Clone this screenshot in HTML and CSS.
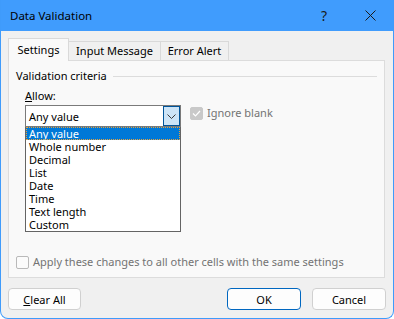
FILE: index.html
```html
<!DOCTYPE html>
<html lang="en">
<head>
  <meta charset="UTF-8">
  <title>Data Validation</title>
  <link rel="stylesheet" href="styles.css">
</head>
<body>
  <div class="window">
    <div class="titlebar">
      <span class="title">Data Validation</span>
      <span class="tb-btn help">?</span>
      <span class="tb-btn close">
        <svg width="11" height="11" viewBox="0 0 11 11"><path d="M0.5 0.5L10.5 10.5M10.5 0.5L0.5 10.5" stroke="#1a1a1a" stroke-width="1" fill="none"/></svg>
      </span>
    </div>

    <div class="content">
      <div class="tabs">
        <div class="tab active">Settings</div>
        <div class="tab tab-input">Input Message</div>
        <div class="tab tab-error">Error Alert</div>
      </div>

      <div class="panel">
        <div class="group-head">
          <span>Validation criteria</span>
          <span class="group-line"></span>
        </div>

        <div class="allow">
          <div class="allow-label"><u>A</u>llow:</div>
          <div class="allow-row">
            <div class="combo">
              <div class="select">
                <span class="select-text">Any value</span>
                <span class="drop-btn">
                  <svg width="9" height="5" viewBox="0 0 9 5"><path d="M0.5 0.5L4.5 4.5L8.5 0.5" stroke="#3b3b3b" stroke-width="1" fill="none"/></svg>
                </span>
              </div>
              <ul class="list">
                <li class="selected">Any value</li>
                <li>Whole number</li>
                <li>Decimal</li>
                <li>List</li>
                <li>Date</li>
                <li>Time</li>
                <li>Text length</li>
                <li>Custom</li>
              </ul>
            </div>
            <div class="check-row ignore">
              <span class="box checked">
                <svg width="9" height="7" viewBox="0 0 9 7"><path d="M1 3.5L3.5 6L8 1" stroke="#fff" stroke-width="1.2" fill="none"/></svg>
              </span>
              <span class="muted">Ignore blank</span>
            </div>
          </div>
        </div>

        <div class="check-row apply">
          <span class="box"></span>
          <span class="muted">Apply these changes to all other cells with the same settings</span>
        </div>
      </div>

      <div class="footer">
        <button class="btn clear"><u>C</u>lear All</button>
        <span class="spacer"></span>
        <button class="btn default">OK</button>
        <button class="btn">Cancel</button>
      </div>
    </div>
  </div>
</body>
</html>
```

FILE: styles.css
```css
body {
  margin: 0;
  background: #fff;
  font-family: "Noto Sans", "Open Sans", sans-serif;
  font-size: 11px;
  color: #000;
}
.window {
  width: 394px;
  height: 319px;
  box-sizing: border-box;
  border: 1px solid #3f9bfb;
  border-top: none;
  border-radius: 0 0 8px 8px;
  background: #f0f0f0;
  overflow: hidden;
}
.titlebar {
  height: 31px;
  background: #409cfd;
  display: flex;
  align-items: center;
  padding-left: 9px;
}
.title {
  flex: 1;
  font-size: 11.5px;
  line-height: 16px;
}
.tb-btn {
  width: 46px;
  height: 31px;
  display: flex;
  align-items: center;
  justify-content: center;
}
.help {
  font-size: 14px;
  color: #1a1a1a;
}
.content {
  padding: 7px 7px 0 7px;
}
.tabs {
  display: flex;
  align-items: flex-end;
  height: 22px;
}
.tab {
  box-sizing: border-box;
  flex-shrink: 0;
  height: 19px;
  border: 1px solid #d9d9d9;
  border-bottom: none;
  background: #f0f0f0;
  line-height: 18px;
  text-align: center;
}
.tab.active {
  width: 61px;
  height: 23px;
  margin-bottom: -1px;
  background: #f9f9f9;
  line-height: 21px;
  position: relative;
  z-index: 1;
}
.tab-input {
  width: 92px;
  border-left: none;
}
.tab-error {
  width: 68px;
  border-left: none;
}
.panel {
  box-sizing: border-box;
  width: 377px;
  height: 218px;
  border: 1px solid #dcdcdc;
  background: #f9f9f9;
  padding: 7px 7px 0 7px;
  display: flex;
  flex-direction: column;
}
.group-head {
  display: flex;
  align-items: center;
  height: 16px;
  line-height: 16px;
}
.group-line {
  flex: 1;
  height: 1px;
  background: #dcdcdc;
  margin-left: 6px;
}
.allow {
  margin-left: 9px;
  margin-top: 4px;
}
.allow-label {
  line-height: 16px;
  height: 16px;
  margin-bottom: 1px;
}
.allow-row {
  display: flex;
  align-items: flex-start;
}
.combo {
  width: 156px;
}
.select {
  box-sizing: border-box;
  height: 22px;
  border: 1px solid #7a7a7a;
  background: #fff;
  display: flex;
  align-items: center;
}
.select-text {
  flex: 1;
  padding-left: 3px;
}
.drop-btn {
  box-sizing: border-box;
  width: 17px;
  height: 20px;
  background: #cce4f7;
  border: 1px solid #005499;
  display: flex;
  align-items: center;
  justify-content: center;
}
.list {
  list-style: none;
  margin: 0;
  padding: 0;
  box-sizing: border-box;
  border: 1px solid #646464;
  border-top: none;
  background: #fff;
}
.list li {
  height: 13px;
  line-height: 13px;
  padding-left: 3px;
}
.list li.selected {
  background: #0078d7;
  color: #fff;
  outline: 1px dotted #e8a23c;
  outline-offset: -1px;
}
.check-row {
  display: flex;
  align-items: center;
  line-height: 16px;
}
.box {
  box-sizing: border-box;
  width: 13px;
  height: 13px;
  border: 1px solid #b9b9b9;
  border-radius: 2px;
  background: #fbfbfb;
  display: flex;
  align-items: center;
  justify-content: center;
  margin-right: 4px;
}
.box.checked {
  background: #c9c9c9;
  border-color: #c9c9c9;
}
.muted {
  color: #737373;
}
.ignore {
  margin-left: 9px;
}
.apply {
  margin-top: auto;
  margin-bottom: 7px;
}
.footer {
  display: flex;
  margin-top: 10px;
  gap: 11px;
}
.spacer {
  flex: 1;
}
.btn {
  box-sizing: border-box;
  width: 74px;
  height: 22px;
  font-family: inherit;
  font-size: 11px;
  background: #fdfdfd;
  border: 1px solid #d0d0d0;
  border-radius: 4px;
  padding: 0;
  color: #000;
}
.btn.clear {
  width: 73px;
}
.btn.default {
  border-color: #0067c0;
}
```
